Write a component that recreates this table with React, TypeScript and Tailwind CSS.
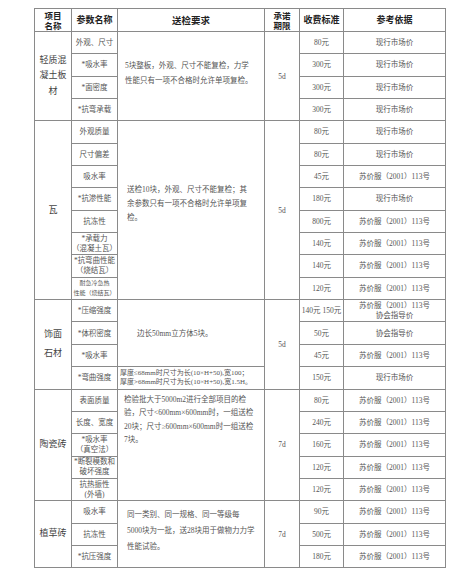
import React from 'react';

type Row = {
  name: React.ReactNode;
  fee: string;
  basis: React.ReactNode;
};

type Group = {
  label: React.ReactNode;
  requirement: React.ReactNode;
  period: string;
  rows: Row[];
};

const SU = '苏价服（2001）113号';
const MKT = '现行市场价';

const two = (a: string, b: string, cls = '') => (
  <div className={`leading-[10px] ${cls}`}>
    <div>{a}</div>
    <div>{b}</div>
  </div>
);

const groups: Group[] = [
  {
    label: (
      <div className="leading-[15.5px]">
        轻质混
        <br />
        凝土板
        <br />材
      </div>
    ),
    requirement: (
      <div className="pl-[7px] leading-[15px] pb-[6px]">
        5块整板，外观、尺寸不能复检，力学
        <br />
        性能只有一项不合格时允许单项复检。
      </div>
    ),
    period: '5d',
    rows: [
      { name: '外观、尺寸', fee: '80元', basis: MKT },
      { name: '*吸水率', fee: '300元', basis: MKT },
      { name: '*面密度', fee: '300元', basis: MKT },
      { name: '*抗弯承载', fee: '300元', basis: MKT },
    ],
  },
  {
    label: <div>瓦</div>,
    requirement: (
      <div className="pl-[9px] leading-[14px] pb-[12px]">
        送检10块，外观、尺寸不能复检；其
        <br />
        余参数只有一项不合格时允许单项复
        <br />
        检。
      </div>
    ),
    period: '5d',
    rows: [
      { name: '外观质量', fee: '80元', basis: MKT },
      { name: '尺寸偏差', fee: '80元', basis: MKT },
      { name: '吸水率', fee: '45元', basis: SU },
      { name: '*抗渗性能', fee: '180元', basis: MKT },
      { name: '抗冻性', fee: '800元', basis: SU },
      { name: two('*承载力', '（混凝土瓦）'), fee: '140元', basis: SU },
      { name: two('*抗弯曲性能', '（烧结瓦）'), fee: '140元', basis: SU },
      { name: two('耐急冷急热', '性能（烧结瓦）', 'text-[6px]'), fee: '120元', basis: SU },
    ],
  },
  {
    label: (
      <div className="leading-[19px]">
        饰面
        <br />
        石材
      </div>
    ),
    requirement: null,
    period: '5d',
    rows: [
      { name: '*压缩强度', fee: '140元 150元', basis: two(SU, '协会指导价') },
      { name: '*体积密度', fee: '50元', basis: '协会指导价' },
      { name: '*吸水率', fee: '45元', basis: SU },
      { name: '*弯曲强度', fee: '150元', basis: MKT },
    ],
  },
  {
    label: <div>陶瓷砖</div>,
    requirement: (
      <div className="pl-[6px] leading-[13.5px] pb-[50px]">
        检验批大于5000m2进行全部项目的检
        <br />
        验，尺寸&lt;600mm×600mm时，一组送检
        <br />
        20块；尺寸≥600mm×600mm时一组送检
        <br />
        7块。
      </div>
    ),
    period: '7d',
    rows: [
      { name: '表面质量', fee: '80元', basis: SU },
      { name: '长度、宽度', fee: '240元', basis: SU },
      { name: two('*吸水率', '（真空法）'), fee: '160元', basis: SU },
      { name: two('*断裂模数和', '破坏强度'), fee: '120元', basis: SU },
      { name: two('抗热振性', '(外墙)'), fee: '120元', basis: SU },
    ],
  },
  {
    label: <div>植草砖</div>,
    requirement: (
      <div className="pl-[9px] leading-[16px] pb-[6px]">
        同一类别、同一规格、同一等级每
        <br />
        5000块为一批，送28块用于做物力力学
        <br />
        性能试验。
      </div>
    ),
    period: '7d',
    rows: [
      { name: '吸水率', fee: '90元', basis: SU },
      { name: '抗冻性', fee: '500元', basis: SU },
      { name: '*抗压强度', fee: '180元', basis: SU },
    ],
  },
];

const cell = 'border border-[#8a8a8a] p-0';

export default function App() {
  return (
    <div
      className="w-[474px] h-[583px] bg-white pt-[8px] pl-[34px] text-[#555] overflow-hidden"
      style={{ fontFamily: '"Liberation Serif", "Noto Sans CJK SC", serif' }}
    >
      <table className="table-fixed border-collapse w-[411px] text-[7.5px]">
        <colgroup>
          <col className="w-[37px]" />
          <col className="w-[46px]" />
          <col className="w-[147px]" />
          <col className="w-[35px]" />
          <col className="w-[44px]" />
          <col className="w-[102px]" />
        </colgroup>
        <thead>
          <tr
            className="h-[23px] text-[9px] font-bold text-[#222] leading-[10.5px]"
            style={{ fontFamily: '"Noto Sans CJK SC", sans-serif' }}
          >
            <th className={`${cell} text-center text-[8.5px]`}>
              <div>项目</div>
              <div>名称</div>
            </th>
            <th className={`${cell} text-center`}>参数名称</th>
            <th className={`${cell} text-center text-[9.5px]`}>送检要求</th>
            <th className={`${cell} text-center text-[8.5px]`}>
              <div>承诺</div>
              <div>期限</div>
            </th>
            <th className={`${cell} text-center`}>收费标准</th>
            <th className={`${cell} text-center`}>参考依据</th>
          </tr>
        </thead>
        <tbody>
          {groups.map((g, gi) =>
            g.rows.map((r, ri) => (
              <tr key={`${gi}-${ri}`} className="h-[22.35px]">
                {ri === 0 && (
                  <td rowSpan={g.rows.length} className={`${cell} text-center text-[9px] text-[#444]`}>
                    {g.label}
                  </td>
                )}
                <td className={`${cell} text-center`}>{r.name}</td>
                {gi === 2 ? (
                  ri === 0 ? (
                    <td rowSpan={3} className={`${cell} text-left`}>
                      <div className="pl-[19px]">边长50mm立方体5块。</div>
                    </td>
                  ) : ri === 3 ? (
                    <td className={`${cell} text-left`}>
                      <div className="pl-[2px] text-[7px] leading-[9px] whitespace-nowrap">
                        厚度≤68mm时尺寸为长(10×H+50),宽100；
                        <br />
                        厚度&gt;68mm时尺寸为长(10×H+50),宽1.5H。
                      </div>
                    </td>
                  ) : null
                ) : (
                  ri === 0 && (
                    <td rowSpan={g.rows.length} className={`${cell} text-left`}>
                      {g.requirement}
                    </td>
                  )
                )}
                {ri === 0 && (
                  <td rowSpan={g.rows.length} className={`${cell} text-center`}>
                    {g.period}
                  </td>
                )}
                <td className={`${cell} text-center whitespace-nowrap`}>{r.fee}</td>
                <td className={`${cell} text-center`}>{r.basis}</td>
              </tr>
            ))
          )}
        </tbody>
      </table>
    </div>
  );
}
